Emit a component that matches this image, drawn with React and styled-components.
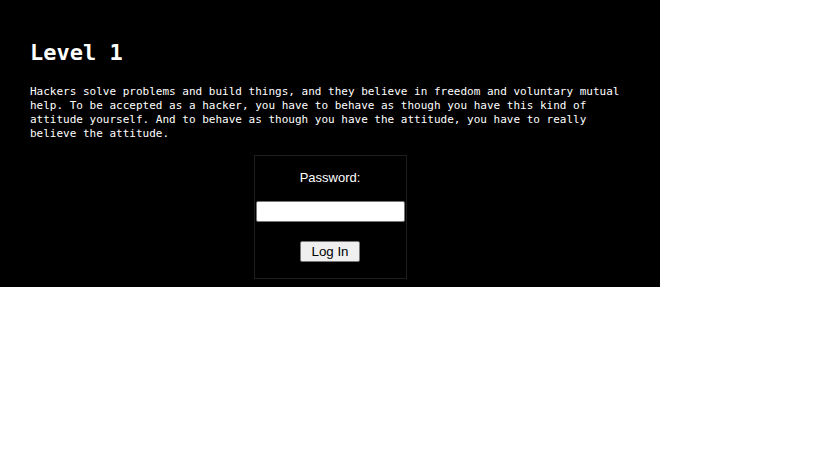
import React from "react";
import styled, { createGlobalStyle } from "styled-components";

const Global = createGlobalStyle`
  html, body { margin: 0; padding: 0; background: #ffffff; }
  body { font-family: "Liberation Sans", Arial, sans-serif; }
`;

const Panel = styled.main`
  box-sizing: border-box;
  width: 660px;
  background: #000000;
  color: #ffffff;
  padding: 40px 30px 8px;
  font-family: "DejaVu Sans Mono", "Liberation Mono", monospace;
`;

const Title = styled.h1`
  margin: 0;
  font-size: 22px;
  line-height: 26px;
  font-weight: bold;
`;

const Intro = styled.p`
  margin: 19px 0 0;
  font-size: 11px;
  line-height: 14px;
`;

const FormRow = styled.div`
  display: flex;
  justify-content: center;
  margin-top: 14px;
`;

const LoginBox = styled.form`
  box-sizing: border-box;
  width: 153px;
  border: 1px solid #1e1e1e;
  padding: 14px 1px 16px;
  display: flex;
  flex-direction: column;
  align-items: center;
  font-family: "Liberation Sans", Arial, sans-serif;
`;

const Label = styled.label`
  font-size: 13px;
  line-height: 15px;
  color: #ffffff;
`;

const PasswordInput = styled.input`
  box-sizing: border-box;
  width: 149px;
  height: 21px;
  margin-top: 16px;
  border: 1px solid #767676;
  border-radius: 2px;
  background: #ffffff;
  padding: 1px 2px;
`;

const Button = styled.button`
  box-sizing: border-box;
  width: 60px;
  height: 21px;
  margin-top: 19px;
  padding: 0;
  font-family: "Liberation Sans", Arial, sans-serif;
  font-size: 13.33px;
  color: #000000;
  background: #efefef;
  border: 1px solid #767676;
  border-radius: 2px;
`;

export default function App() {
  return (
    <>
      <Global />
      <Panel>
        <Title>Level 1</Title>
        <Intro>
          Hackers solve problems and build things, and they believe in freedom and voluntary mutual
          help. To be accepted as a hacker, you have to behave as though you have this kind of
          attitude yourself. And to behave as though you have the attitude, you have to really
          believe the attitude.
        </Intro>
        <FormRow>
          <LoginBox onSubmit={(e) => e.preventDefault()}>
            <Label htmlFor="pw">Password:</Label>
            <PasswordInput id="pw" type="password" />
            <Button type="submit">Log In</Button>
          </LoginBox>
        </FormRow>
      </Panel>
    </>
  );
}
